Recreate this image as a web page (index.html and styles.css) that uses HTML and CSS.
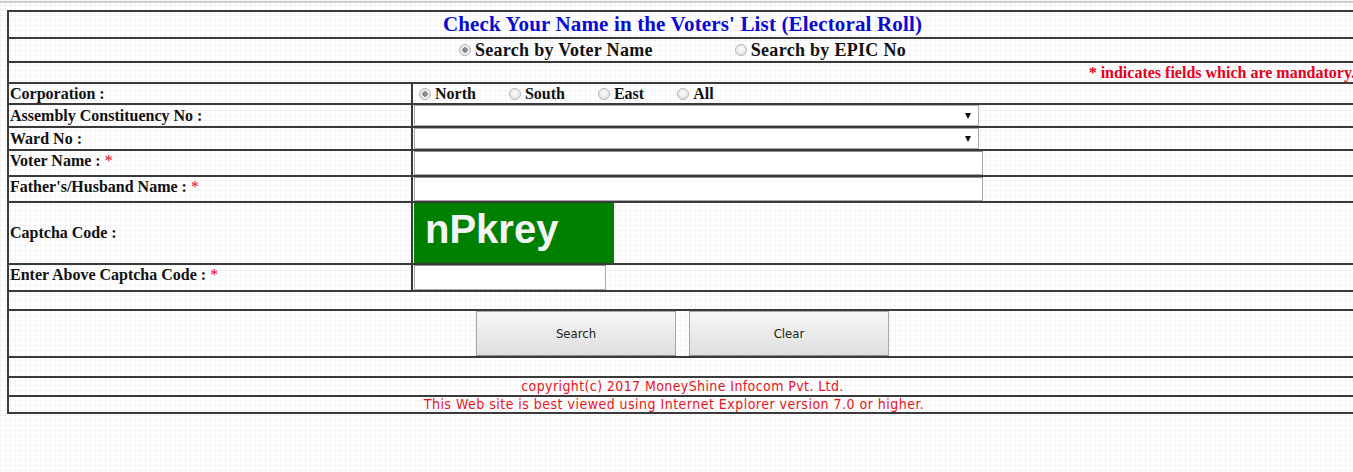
FILE: index.html
```html
<!DOCTYPE html>
<html lang="en">
<head>
<meta charset="UTF-8" />
<title>Check Your Name in the Voters' List</title>
<link rel="stylesheet" href="styles.css">
</head>
<body>
<div class="topline"></div>
<form class="page" onsubmit="return false;">
  <table class="roll">
    <tr class="r-title">
      <td colspan="2" class="title">Check Your Name in the Voters' List (Electoral Roll)</td>
    </tr>
    <tr class="r-mode">
      <td colspan="2">
        <div class="mode">
          <label><input type="radio" name="mode" checked> Search by Voter Name</label>
          <label><input type="radio" name="mode"> Search by EPIC No</label>
        </div>
      </td>
    </tr>
    <tr class="r-note">
      <td colspan="2" class="note">* indicates fields which are mandatory.</td>
    </tr>
    <tr class="r-corp">
      <td class="lbl">Corporation :</td>
      <td class="fld">
        <div class="corp">
          <label><input type="radio" name="corp" checked> North</label>
          <label><input type="radio" name="corp"> South</label>
          <label><input type="radio" name="corp"> East</label>
          <label><input type="radio" name="corp"> All</label>
        </div>
      </td>
    </tr>
    <tr class="r-sel">
      <td class="lbl">Assembly Constituency No :</td>
      <td class="fld"><span class="select-wrap"><select></select></span></td>
    </tr>
    <tr class="r-sel2">
      <td class="lbl">Ward No :</td>
      <td class="fld"><span class="select-wrap"><select></select></span></td>
    </tr>
    <tr class="r-text">
      <td class="lbl up">Voter Name : <span class="req">*</span></td>
      <td class="fld"><input type="text" class="txt"></td>
    </tr>
    <tr class="r-text">
      <td class="lbl up">Father's/Husband Name : <span class="req">*</span></td>
      <td class="fld"><input type="text" class="txt"></td>
    </tr>
    <tr class="r-captcha">
      <td class="lbl">Captcha Code :</td>
      <td class="fld"><div class="captcha">nPkrey</div></td>
    </tr>
    <tr class="r-text2">
      <td class="lbl up">Enter Above Captcha Code : <span class="req">*</span></td>
      <td class="fld"><input type="text" class="txt short"></td>
    </tr>
    <tr class="r-gap">
      <td colspan="2"></td>
    </tr>
    <tr class="r-btns">
      <td colspan="2">
        <div class="btns">
          <button type="submit">Search</button>
          <button type="reset">Clear</button>
        </div>
      </td>
    </tr>
    <tr class="r-gap2">
      <td colspan="2"></td>
    </tr>
    <tr class="r-foot">
      <td colspan="2" class="foot">copyright(c) 2017 MoneyShine Infocom Pvt. Ltd.</td>
    </tr>
    <tr class="r-foot2">
      <td colspan="2" class="foot browser">This Web site is best viewed using Internet Explorer version 7.0 or higher.</td>
    </tr>
  </table>
</form>
</body>
</html>
```

FILE: styles.css
```css
* {
  box-sizing: border-box;
}
html {
  overflow: hidden;
}
body {
  margin: 0;
  background-color: #fff;
  background-image:
    linear-gradient(to right, rgba(0, 0, 0, 0.035) 1px, transparent 1px),
    linear-gradient(to bottom, rgba(0, 0, 0, 0.035) 1px, transparent 1px);
  background-size: 5px 5px;
  font-family: 'Liberation Serif', 'Times New Roman', serif;
  color: #111;
}
.topline {
  margin-top: 1px;
  height: 2px;
  background: #cfcfcf;
}
.page {
  margin: 0;
  padding: 7px 0 0 7px;
  width: 1400px;
}
.roll {
  width: 1351px;
  border-collapse: collapse;
  border: 2px solid #3a3a3a;
}
.roll td {
  border: 2px solid #3a3a3a;
  padding: 0 1px;
  vertical-align: middle;
}
.r-title td { height: 27px; }
.r-mode td { height: 24px; }
.r-note td { height: 21px; }
.r-corp td { height: 21px; }
.r-sel td { height: 23px; }
.r-sel2 td { height: 23px; }
.r-text td { height: 26px; }
.r-captcha td { height: 62px; }
.r-text2 td { height: 27px; }
.r-gap td { height: 19px; }
.r-btns td { height: 47px; }
.r-gap2 td { height: 20px; }
.r-foot td { height: 19px; }
.r-foot2 td { height: 17px; }

.title {
  text-align: center;
  color: #0a0ad2;
  font-size: 21px;
  letter-spacing: 0.15px;
  font-weight: bold;
  padding-top: 1px;
}
.mode {
  display: flex;
  justify-content: center;
  gap: 82px;
  font-size: 18px;
  letter-spacing: 0.3px;
  font-weight: bold;
}
.mode label,
.corp label {
  display: flex;
  align-items: center;
  gap: 4px;
}
.note {
  text-align: right;
  color: #e8001c;
  font-size: 16px;
  font-weight: bold;
}
.lbl {
  width: 404px;
  font-size: 16px;
  font-weight: bold;
  padding-left: 1px;
}
.lbl.up {
  padding-bottom: 5px;
}
.req {
  color: #e8001c;
  font-weight: normal;
}
.fld {
  padding-left: 1px;
}
.corp {
  display: flex;
  gap: 33px;
  padding-left: 5px;
  font-size: 16px;
  font-weight: bold;
}

input[type="radio"] {
  appearance: none;
  margin: 0;
  width: 12px;
  height: 12px;
  border-radius: 50%;
  border: 1px solid #b5b5b5;
  background: radial-gradient(circle at 50% 40%, #fbfbfb 0, #dcdcdc 100%);
}
input[type="radio"]:checked {
  background: radial-gradient(circle, #8a8a8a 0, #8a8a8a 2.5px, #f4f4f4 3px, #d8d8d8 100%);
}

.select-wrap {
  position: relative;
  display: block;
  width: 565px;
}
.select-wrap::after {
  content: "";
  position: absolute;
  right: 8px;
  top: 8px;
  border-left: 3.5px solid transparent;
  border-right: 3.5px solid transparent;
  border-top: 6px solid #111;
}
select {
  appearance: none;
  display: block;
  width: 565px;
  height: 21px;
  margin: 0;
  border: 1px solid #a9a9a9;
  background: #fff;
  border-radius: 0;
}
.txt {
  display: block;
  width: 569px;
  height: 24px;
  margin: 0;
  border: 1px solid #a9a9a9;
  border-top-color: #8c8c8c;
  background: #fff;
}
.txt.short {
  width: 192px;
  height: 25px;
}
.captcha {
  width: 200px;
  height: 60px;
  background: #008000;
  color: #f4f4f4;
  font-family: 'Liberation Sans', Arial, sans-serif;
  font-size: 40px;
  font-weight: bold;
  line-height: 53px;
  padding-left: 11px;
}
.btns {
  display: flex;
  justify-content: center;
  gap: 13px;
}
.btns button {
  width: 200px;
  height: 45px;
  border: 1px solid #a6a6a6;
  border-bottom-color: #8a8a8a;
  border-radius: 0;
  background: linear-gradient(to bottom, #f7f7f7, #dedede);
  font-family: 'DejaVu Sans Condensed', 'DejaVu Sans', sans-serif;
  font-size: 13px;
  color: #222;
}
.foot {
  text-align: center;
  color: #e8141c;
  font-family: 'DejaVu Sans Condensed', 'DejaVu Sans', sans-serif;
  font-size: 14px;
  letter-spacing: 0.4px;
  line-height: 15px;
}
.foot.browser {
  letter-spacing: 0.48px;
  padding-right: 18px;
}
```
